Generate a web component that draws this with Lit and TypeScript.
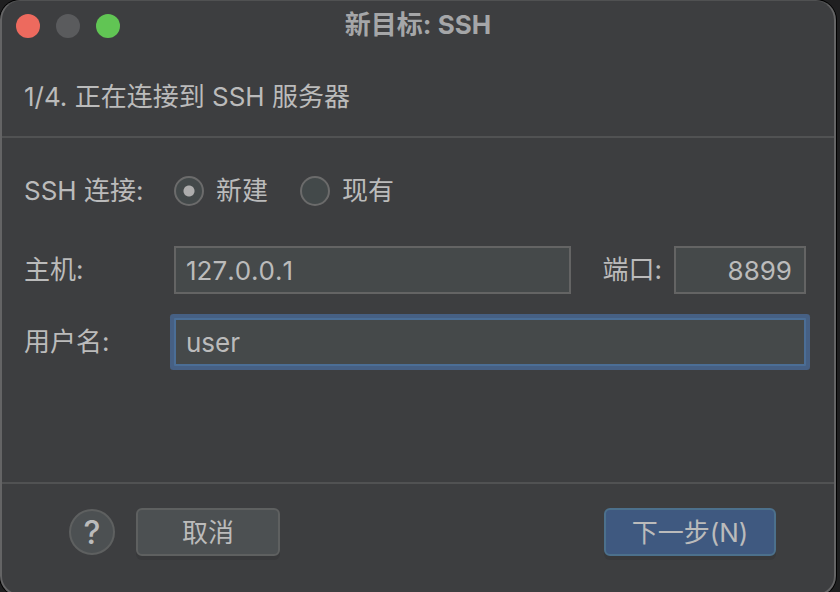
import { LitElement, html, css } from "lit";
import { customElement, state } from "lit/decorators.js";

@customElement("app-root")
export class AppRoot extends LitElement {
  @state() private mode = "new";

  static styles = css`
    :host {
      display: block;
      height: 100vh;
      overflow: hidden;
      background: #1f1f20;
      color: #bbbbbb;
      font-family: Inter, "Noto Sans CJK SC", sans-serif;
      font-size: 26px;
      line-height: 32px;
    }
    * {
      box-sizing: border-box;
    }
    .window {
      display: flex;
      flex-direction: column;
      min-height: calc(100vh + 4px);
      margin-right: 4px;
      border: 2px solid #646465;
      border-top: 1px solid #505152;
      border-radius: 20px;
      background: #3d3e40;
      box-shadow: 0 0 0 1px #000000;
    }
    .titlebar {
      display: grid;
      grid-template-columns: 1fr auto 1fr;
      align-items: center;
      height: 50px;
      padding: 0 14px;
    }
    .lights {
      display: flex;
      gap: 16px;
    }
    .light {
      width: 24px;
      height: 24px;
      padding: 0;
      border: 0;
      border-radius: 50%;
      background: #5a5b5d;
    }
    .close {
      background: #ed6a5e;
    }
    .zoom {
      background: #61c554;
    }
    .title {
      margin: 0;
      padding-bottom: 2px;
      color: #a5a6a8;
      font-size: 26px;
      font-weight: 700;
      font-kerning: none;
    }
    .step {
      margin: 0;
      padding: 30px 22px 23px;
      border-bottom: 2px solid #515253;
      font-weight: 400;
      font-size: 26px;
    }
    .form {
      flex: 1;
      display: grid;
      grid-template-columns: 126px 1fr;
      align-content: start;
      align-items: center;
      gap: 24px;
      padding: 37px 28px 24px 22px;
    }
    .modes {
      display: flex;
      gap: 32px;
    }
    .row-mode {
      margin-bottom: 15px;
    }
    .mode {
      display: flex;
      align-items: center;
      gap: 12px;
    }
    .radio {
      appearance: none;
      width: 30px;
      height: 30px;
      margin: 0;
      border: 2px solid #6b6b6b;
      border-radius: 50%;
      background: #43494a;
    }
    .radio:checked {
      background: radial-gradient(circle, #adadad 5px, #43494a 6px);
    }
    .address {
      display: flex;
      align-items: center;
      gap: 12px;
    }
    .field {
      width: 100%;
      min-width: 0;
      height: 48px;
      padding: 0 10px;
      border: 2px solid #646464;
      border-radius: 0;
      outline: none;
      background: #45494a;
      color: #bbbbbb;
      font: inherit;
      font-kerning: none;
    }
    .host {
      flex: 1;
      margin-right: 20px;
    }
    .port {
      width: 132px;
      padding-right: 12px;
      text-align: right;
    }
    .active {
      border-color: #4b6e96;
      box-shadow: 0 0 0 4px #466084;
      border-radius: 1px;
    }
    .footer {
      display: flex;
      align-items: center;
      gap: 21px;
      padding: 24px 58px 38px 67px;
      border-top: 2px solid #515253;
    }
    .button {
      height: 48px;
      padding: 2px 0 0;
      border: 2px solid #5e6060;
      border-radius: 6px;
      background: #4c5052;
      box-shadow: 0 4px 0 #38393b;
      color: #bbbbbb;
      font: inherit;
    }
    .cancel {
      width: 144px;
    }
    .next {
      width: 172px;
      margin-left: auto;
      border-color: #4c708c;
      background: #3f5980;
    }
    .help {
      width: 46px;
      height: 46px;
      box-shadow: none;
      border-radius: 50%;
      font-size: 32px;
      font-weight: 500;
    }
  `;

  private option(value: string, label: string) {
    return html`<label class="mode">
      <input
        class="radio"
        type="radio"
        name="mode"
        value=${value}
        .checked=${this.mode === value}
        @change=${() => (this.mode = value)}
      />${label}</label>`;
  }

  render() {
    return html`
      <main class="window">
        <header class="titlebar">
          <div class="lights">
            <button class="light close"></button>
            <button class="light" disabled></button>
            <button class="light zoom"></button>
          </div>
          <h1 class="title">新目标: SSH</h1>
        </header>
        <h2 class="step">1/4. 正在连接到 SSH 服务器</h2>
        <form class="form" id="target" @submit=${(e: Event) => e.preventDefault()}>
          <span class="row-mode" id="mode-label">SSH 连接:</span>
          <div class="modes row-mode" role="radiogroup" aria-labelledby="mode-label">
            ${this.option("new", "新建")}${this.option("existing", "现有")}
          </div>
          <label for="host">主机:</label>
          <div class="address">
            <input class="field host" id="host" type="text" value="127.0.0.1" />
            <label for="port">端口:</label>
            <input class="field port" id="port" type="text" inputmode="numeric" value="8899" />
          </div>
          <label for="user">用户名:</label>
          <input class="field active" id="user" type="text" value="user" />
        </form>
        <footer class="footer">
          <button class="button help" type="button">?</button>
          <button class="button cancel" type="button">取消</button>
          <button class="button next" type="submit" form="target">下一步(N)</button>
        </footer>
      </main>
    `;
  }
}
